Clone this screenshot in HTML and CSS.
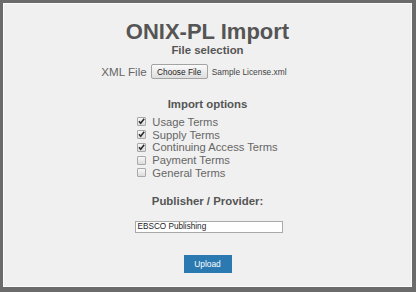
FILE: index.html
```html
<!DOCTYPE html>
<html>
<head>
<meta charset="utf-8">
<link rel="stylesheet" href="styles.css">
</head>
<body>
<div class="frame">
  <h1 class="title">ONIX-PL Import</h1>
  <h2 class="heading">File selection</h2>
  <div class="file-row">
    <span class="file-label">XML File</span>
    <span class="choose">Choose File</span>
    <span class="file-name">Sample License.xml</span>
  </div>
  <h2 class="heading options">Import options</h2>
  <div class="list">
    <label class="item"><span class="box"><svg viewBox="0 0 9 9" width="9" height="9"><path d="M2 4.3 L3.7 6.3 L7.2 1.8" fill="none" stroke="#2a2a2a" stroke-width="1.6"/></svg></span>Usage Terms</label>
    <label class="item"><span class="box"><svg viewBox="0 0 9 9" width="9" height="9"><path d="M2 4.3 L3.7 6.3 L7.2 1.8" fill="none" stroke="#2a2a2a" stroke-width="1.6"/></svg></span>Supply Terms</label>
    <label class="item"><span class="box"><svg viewBox="0 0 9 9" width="9" height="9"><path d="M2 4.3 L3.7 6.3 L7.2 1.8" fill="none" stroke="#2a2a2a" stroke-width="1.6"/></svg></span>Continuing Access Terms</label>
    <label class="item"><span class="box"></span>Payment Terms</label>
    <label class="item"><span class="box"></span>General Terms</label>
  </div>
  <h2 class="heading publisher">Publisher / Provider:</h2>
  <div class="input">EBSCO Publishing</div>
  <div class="upload">Upload</div>
</div>
</body>
</html>
```
FILE: styles.css
```css
html, body {
  margin: 0;
  padding: 0;
  background: #6b6b6b;
}
.frame {
  width: 416px;
  height: 292px;
  box-sizing: border-box;
  border-style: solid;
  border-color: #6b6b6b;
  border-width: 3px 4px 5px 3px;
  background: #f0f0f0;
  box-shadow: inset 1px 1px 0 #fcfcfc, inset -1px -1px 0 #fcfcfc;
  display: flex;
  flex-direction: column;
  align-items: center;
  padding-top: 17px;
  font-family: "Liberation Sans", Arial, sans-serif;
  color: #585858;
}
.title {
  margin: 0;
  font-size: 22px;
  line-height: 24px;
  font-weight: bold;
  color: #555;
}
.heading {
  margin: 0;
  font-size: 11.4px;
  line-height: 13px;
  font-weight: bold;
  color: #555;
}
.file-row {
  margin-top: 7px;
  height: 15px;
  display: flex;
  align-items: center;
  padding-right: 27px;
}
.file-label {
  font-size: 11.6px;
  color: #666;
  margin-right: 4px;
}
.choose {
  box-sizing: border-box;
  width: 57px;
  height: 15px;
  border: 1px solid #a3a3a3;
  border-radius: 2px;
  background: linear-gradient(#fafafa, #dedede);
  font-size: 8.3px;
  color: #222;
  display: flex;
  align-items: center;
  justify-content: center;
  margin-right: 4px;
}
.file-name {
  font-size: 8.4px;
  color: #444;
}
.options {
  margin-top: 19px;
}
.list {
  margin-top: 4.5px;
  display: flex;
  flex-direction: column;
}
.item {
  display: flex;
  align-items: center;
  height: 12.75px;
  font-size: 11.2px;
  color: #666;
}
.box {
  box-sizing: border-box;
  width: 9px;
  height: 9px;
  border: 1px solid #a8a8a8;
  border-radius: 1px;
  background: linear-gradient(#f8f8f8, #dcdcdc);
  margin-right: 6px;
  display: flex;
  align-items: center;
  justify-content: center;
  overflow: visible;
}
.box svg {
  flex: none;
}
.publisher {
  margin-top: 15.5px;
}
.input {
  margin-top: 13px;
  box-sizing: border-box;
  width: 148px;
  height: 12px;
  border: 1px solid #a9a9a9;
  background: #fff;
  font-size: 8.2px;
  line-height: 10px;
  padding-left: 2px;
  color: #222;
  margin-left: 2px;
}
.upload {
  margin-top: 22px;
  width: 48px;
  height: 18px;
  background: #2a79b0;
  color: #fff;
  font-size: 8.4px;
  display: flex;
  align-items: center;
  justify-content: center;
}
```
